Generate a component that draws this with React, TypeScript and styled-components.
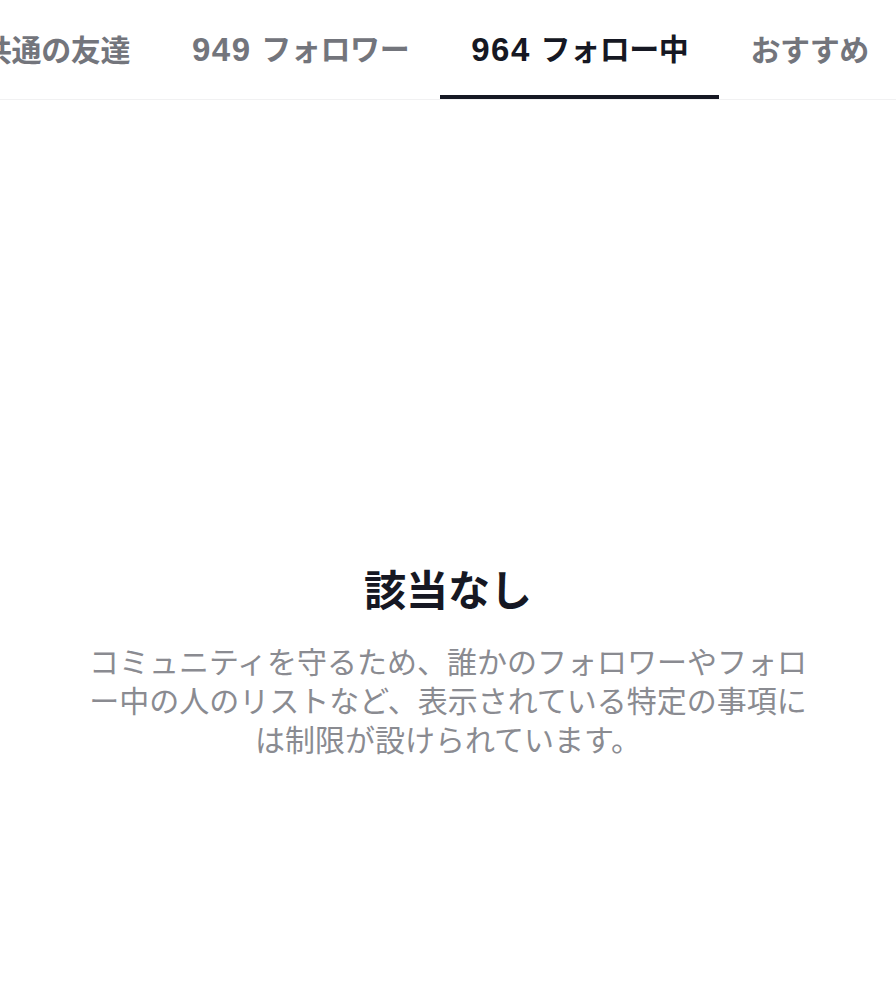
import React from "react";
import styled, { createGlobalStyle } from "styled-components";

const Global = createGlobalStyle`
  html, body { margin: 0; padding: 0; background: #ffffff; }
  body { font-family: "Noto Sans CJK JP", "Noto Sans", sans-serif; }
  * { box-sizing: border-box; }
`;

const Page = styled.div`
  width: 896px;
  height: 999px;
  overflow: hidden;
  background: #ffffff;
`;

const TabBar = styled.div`
  height: 100px;
  border-bottom: 1px solid #f1f1f2;
  overflow: hidden;
`;

const TabRow = styled.div`
  display: flex;
  height: 100%;
  margin-left: -49px;
`;

const Tab = styled.div<{ $active?: boolean }>`
  position: relative;
  flex: none;
  display: flex;
  align-items: center;
  padding: 0 31px 3px;
  height: 100%;
  font-size: 30px;
  letter-spacing: -0.4px;
  font-weight: 700;
  white-space: pre;
  color: ${(p) => (p.$active ? "#161823" : "#73757c")};
  &::after {
    content: "";
    display: ${(p) => (p.$active ? "block" : "none")};
    position: absolute;
    left: 0;
    right: 0;
    bottom: -1px;
    height: 5px;
    background: #161823;
  }
`;

const Label = styled.span`
  display: block;
  line-height: 44px;
`;

const Count = styled.span`
  font-family: "Liberation Sans", "Noto Sans", sans-serif;
  font-size: 33px;
  font-weight: 700;
  letter-spacing: 1.5px;
  vertical-align: -1px;
  margin-right: -1px;
`;

const Empty = styled.div`
  display: flex;
  flex-direction: column;
  align-items: center;
  padding: 460px 86px 0;
  text-align: center;
`;

const Title = styled.h2`
  margin: 0;
  font-size: 42px;
  font-weight: 700;
  line-height: 56px;
  color: #161823;
`;

const Desc = styled.p`
  margin: 25px 0 0;
  font-size: 30px;
  line-height: 39px;
  font-weight: 400;
  color: #8a8b91;
  width: 724px;
`;

export default function App() {
  return (
    <Page>
      <Global />
      <TabBar>
        <TabRow>
          <Tab>
            <Label>共通の友達</Label>
          </Tab>
          <Tab>
            <Label>
              <Count>949 </Count>フォロワー
            </Label>
          </Tab>
          <Tab $active>
            <Label>
              <Count>964 </Count>フォロー中
            </Label>
          </Tab>
          <Tab>
            <Label>おすすめ</Label>
          </Tab>
        </TabRow>
      </TabBar>
      <Empty>
        <Title>該当なし</Title>
        <Desc>
          コミュニティを守るため、誰かのフォロワーやフォロー中の人のリストなど、表示されている特定の事項には制限が設けられています。
        </Desc>
      </Empty>
    </Page>
  );
}
